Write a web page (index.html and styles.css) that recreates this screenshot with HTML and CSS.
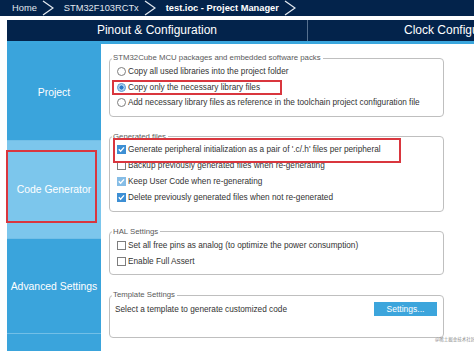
FILE: index.html
```html
<!DOCTYPE html>
<html lang="en">

<head>
  <meta charset="utf-8">
  <title>test.ioc - Project Manager</title>
  <link rel="stylesheet" href="styles.css">
</head>

<body>
  <div class="crumbs">
    <span>Home</span>
    <svg class="chev" viewBox="0 0 12 16"><polyline points="1,1 11,8 1,15"></polyline></svg>
    <span>STM32F103RCTx</span>
    <svg class="chev" viewBox="0 0 12 16"><polyline points="1,1 11,8 1,15"></polyline></svg>
    <span class="current">test.ioc - Project Manager</span>
    <svg class="chev" viewBox="0 0 12 16"><polyline points="1,1 11,8 1,15"></polyline></svg>
  </div>

  <div class="frame">
    <div class="tabs">
      <div class="tab tab-pinout">Pinout &amp; Configuration</div>
      <div class="tab tab-clock">Clock Configuration</div>
    </div>
    <div class="strip"></div>

    <div class="main">
      <div class="side">
        <div class="side-item item-project">Project</div>
        <div class="side-item item-code on">Code Generator</div>
        <div class="side-item item-adv">Advanced Settings</div>
        <div class="side-item item-rest"></div>
      </div>

      <div class="content">
        <fieldset class="group group-packs">
          <legend>STM32Cube MCU packages and embedded software packs</legend>
          <div class="row"><span class="radio"></span>Copy all used libraries into the project folder</div>
          <div class="row"><span class="radio on"></span>Copy only the necessary library files</div>
          <div class="row"><span class="radio"></span>Add necessary library files as reference in the toolchain project configuration file</div>
        </fieldset>

        <fieldset class="group group-files">
          <legend>Generated files</legend>
          <div class="row"><span class="check on"></span>Generate peripheral initialization as a pair of '.c/.h' files per peripheral</div>
          <div class="row"><span class="check"></span>Backup previously generated files when re-generating</div>
          <div class="row"><span class="check on dim"></span>Keep User Code when re-generating</div>
          <div class="row"><span class="check on"></span>Delete previously generated files when not re-generated</div>
        </fieldset>

        <fieldset class="group group-hal">
          <legend>HAL Settings</legend>
          <div class="row"><span class="check"></span>Set all free pins as analog (to optimize the power consumption)</div>
          <div class="row"><span class="check"></span>Enable Full Assert</div>
        </fieldset>

        <fieldset class="group group-template">
          <legend>Template Settings</legend>
          <div class="row row-template">
            <span>Select a template to generate customized code</span>
            <button class="btn" type="button">Settings...</button>
          </div>
        </fieldset>
      </div>
    </div>
  </div>

  <!-- red annotation boxes drawn over the screenshot -->
  <div class="mark mark-lib"></div>
  <div class="mark mark-gen"></div>
  <div class="mark mark-side"></div>

  <div class="watermark">@稀土掘金技术社区</div>
</body>

</html>
```

FILE: styles.css
```css
body {
  margin: 0;
  width: 474px;
  height: 351px;
  overflow: hidden;
  position: relative;
  background: #fff;
  font-family: "Liberation Sans", Arial, sans-serif;
}

.crumbs {
  display: flex;
  align-items: center;
  height: 16px;
  padding-left: 12px;
  background: #03234b;
  color: #e2e8ef;
  font-size: 9.3px;
  white-space: nowrap;
}

.crumbs .current {
  font-weight: bold;
  color: #fff;
}

.chev {
  width: 12px;
  height: 16px;
  margin: 0 10px 0 5px;
  flex: none;
}

.chev polyline {
  fill: none;
  stroke: #e2e8ef;
  stroke-width: 1.3;
}

.frame {
  margin: 4px 0 0 7px;
}

.tabs {
  display: flex;
  height: 21px;
  line-height: 21px;
  background: #03234b;
  color: #fff;
  font-size: 12px;
  white-space: nowrap;
  overflow: hidden;
}

.tab-pinout {
  width: 300px;
  flex: none;
  text-align: center;
  border-right: 1px solid #56708f;
}

.tab-clock {
  padding-left: 96px;
}

.strip {
  height: 3px;
  background: #3aa6dd;
}

.main {
  display: flex;
  height: 307px;
}

.side {
  width: 94px;
  flex: none;
  display: flex;
  flex-direction: column;
  background: #3aa4dc;
  color: #fff;
  font-size: 10.4px;
}

.side-item {
  display: flex;
  align-items: center;
  justify-content: center;
  border-bottom: 1px solid #72bfe7;
  flex: none;
}

.item-project {
  height: 96px;
}

.item-code {
  height: 97px;
}

.item-adv {
  height: 94px;
}

.item-rest {
  flex: 1;
  border-bottom: 0;
}

.side-item.on {
  background: #7cc6ec;
}

.content {
  display: flex;
  flex-direction: column;
  gap: 15px;
  padding: 9px 0 0 8px;
}

.group {
  width: 335px;
  box-sizing: border-box;
  margin: 0;
  padding: 1px 6px 5px 2px;
  border: 1px solid #bfbfbf;
  border-radius: 4px;
  min-width: 0;
}

.group legend {
  padding: 0 2px 0 1px;
  font-size: 7.8px;
  line-height: 10px;
  color: #5a5a5a;
}

.row {
  display: flex;
  align-items: center;
  height: 15.5px;
  padding-left: 5px;
  font-size: 8.25px;
  color: #333;
  white-space: nowrap;
}

.group-files .row {
  height: 16px;
}

.group-files {
  padding-top: 0;
}

.group-hal {
  padding-top: 1.5px;
}

.radio,
.check {
  width: 9px;
  height: 9px;
  box-sizing: border-box;
  margin-right: 2px;
  border: 1px solid #7d7d7d;
  background: #fff;
  flex: none;
}

.radio {
  border-radius: 50%;
}

.radio.on {
  border-color: #4c8fcc;
  background: radial-gradient(circle, #2a78c8 0 1.8px, #a9d2f0 2.3px 3.5px, #fff 3.6px);
}

.check.on {
  border-color: #3d8fd4;
  background: #3d8fd4 url("data:image/svg+xml;utf8,<svg xmlns='http://www.w3.org/2000/svg' viewBox='0 0 9 9'><path d='M1.8 4.3 L3.6 6.2 L7 2.4' fill='none' stroke='white' stroke-width='1.4'/></svg>") center / 9px 9px no-repeat;
}

.check.on.dim {
  border-color: #86bde6;
  background-color: #86bde6;
}

.row-template {
  height: 16px;
  padding-left: 3px;
  justify-content: space-between;
}

.group-template {
  padding-bottom: 20px;
}

.btn {
  width: 63px;
  height: 14px;
  padding: 0;
  border: 0;
  background: #3ca5dc;
  color: #fff;
  font-family: "Liberation Sans", Arial, sans-serif;
  font-size: 8.5px;
}

.mark {
  position: absolute;
  box-sizing: border-box;
  border: 2px solid #d9363e;
}

.mark-lib {
  left: 112px;
  top: 80px;
  width: 170px;
  height: 15px;
}

.mark-gen {
  left: 113px;
  top: 138px;
  width: 288px;
  height: 25px;
}

.mark-side {
  left: 6px;
  top: 150px;
  width: 91px;
  height: 73px;
}

.watermark {
  position: absolute;
  left: 435px;
  top: 336px;
  font-family: "Noto Sans CJK SC", sans-serif;
  font-size: 4.5px;
  color: #8a8a8a;
  white-space: nowrap;
}
```
